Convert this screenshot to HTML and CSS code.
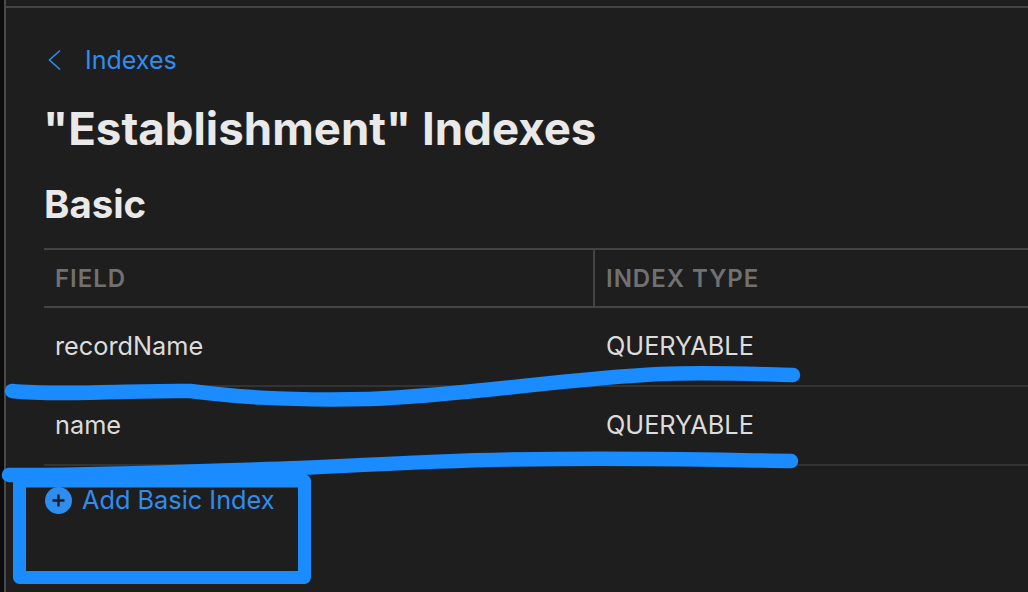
FILE: index.html
```html
<!DOCTYPE html>
<html lang="en">
<head>
<meta charset="utf-8">
<title>Establishment Indexes</title>
<link rel="stylesheet" href="styles.css">
</head>
<body>
<div class="app">
  <div class="rail"></div>
  <div class="pane">
    <div class="topbar"></div>
    <main class="content">
      <a class="back">
        <svg class="chevron" width="14" height="22" viewBox="0 0 14 22"><path d="M13 1.500 L2.500 11 L13 20.500" fill="none" stroke="#2f8df0" stroke-width="1.6"/></svg>
        <span>Indexes</span>
      </a>
      <h1 class="title">"Establishment" Indexes</h1>
      <h2 class="section">Basic</h2>
      <div class="table">
        <div class="row head">
          <div class="cell field">FIELD</div>
          <div class="cell type">INDEX TYPE</div>
        </div>
        <div class="row body">
          <div class="cell field">recordName</div>
          <div class="cell type">QUERYABLE</div>
        </div>
        <div class="row body">
          <div class="cell field">name</div>
          <div class="cell type">QUERYABLE</div>
        </div>
      </div>
      <a class="add">
        <svg class="plus" width="27" height="27" viewBox="0 0 27 27"><circle cx="13.500" cy="13.500" r="13.500" fill="#2f8df0"/><path d="M7.500 13.500 H19.500 M13.500 7.500 V19.500" stroke="#1e1e1e" stroke-width="2.400"/></svg>
        <span>Add Basic Index</span>
      </a>
    </main>
  </div>
  <svg class="marks" width="1028" height="592" viewBox="0 0 1028 592">
    <rect class="box" x="19.500" y="481" width="285" height="96.500"/>
    <path class="mark" d="M12 391 C60 396 130 390 190 391 C230 396 280 401 370 399 C470 395 560 379 660 374 C710 372 750 374 793 375"/>
    <path class="mark" d="M9 475 C100 476 200 471 300 468 C400 463 480 459 560 459 C640 458 720 460 791 461"/>
  </svg>
</div>
</body>
</html>
```
FILE: styles.css
```css
* { box-sizing: border-box; }
html, body { margin: 0; padding: 0; }
body {
  width: 1028px;
  height: 592px;
  overflow: hidden;
  background: #1e1e1e;
  font-family: "Inter", "Liberation Sans", sans-serif;
}
.app {
  position: relative;
  display: flex;
  width: 1028px;
  height: 592px;
  overflow: hidden;
}
.rail {
  flex: none;
  width: 6px;
  background: #0b0c0e;
  border-right: 2px solid #4a4a4a;
}
.pane {
  flex: 1;
  min-width: 0;
  background: #1e1e1e;
}
.topbar {
  height: 8px;
  border-bottom: 2px solid #444;
}
.content {
  padding: 36px 0 0 38px;
}
.back {
  display: flex;
  align-items: center;
  gap: 24px;
  margin-left: 3px;
  height: 32px;
  color: #2f8df0;
  font-size: 25px;
  line-height: 32px;
}
.title {
  margin: 26px 0 0 -1px;
  font-size: 45.600px;
  line-height: 54px;
  font-weight: 700;
  color: #e9e9e9;
}
.section {
  margin: 26px 0 0;
  font-size: 38.400px;
  line-height: 44px;
  font-weight: 700;
  color: #e9e9e9;
}
.table {
  margin-top: 22px;
}
.row {
  display: flex;
  align-items: center;
}
.row.head {
  height: 60px;
  border-top: 2px solid #444;
  border-bottom: 2px solid #444;
  color: #717171;
  font-size: 24px;
  font-weight: 600;
  letter-spacing: 1px;
}
.row.body {
  height: 79px;
  padding-bottom: 2px;
  border-bottom: 2px solid #333;
  color: #dcdcdc;
  font-size: 25.300px;
}
.cell.field {
  width: 549px;
  padding-left: 11px;
}
.cell.type {
  padding-left: 13px;
}
.row.head .cell {
  height: 100%;
  display: flex;
  align-items: center;
}
.row.head .cell.type {
  border-left: 2px solid #444;
  padding-left: 11px;
}
.add {
  display: flex;
  align-items: center;
  gap: 10px;
  margin: 19px 0 0 1px;
  color: #2f8df0;
  font-size: 25.300px;
  line-height: 30px;
}
.marks {
  position: absolute;
  left: 0;
  top: 0;
  pointer-events: none;
}
.mark {
  fill: none;
  stroke: #1a8cff;
  stroke-width: 14.500px;
  stroke-linecap: round;
  stroke-linejoin: round;
}
.box {
  fill: none;
  stroke: #1a8cff;
  stroke-width: 13px;
  stroke-linejoin: round;
}
```
